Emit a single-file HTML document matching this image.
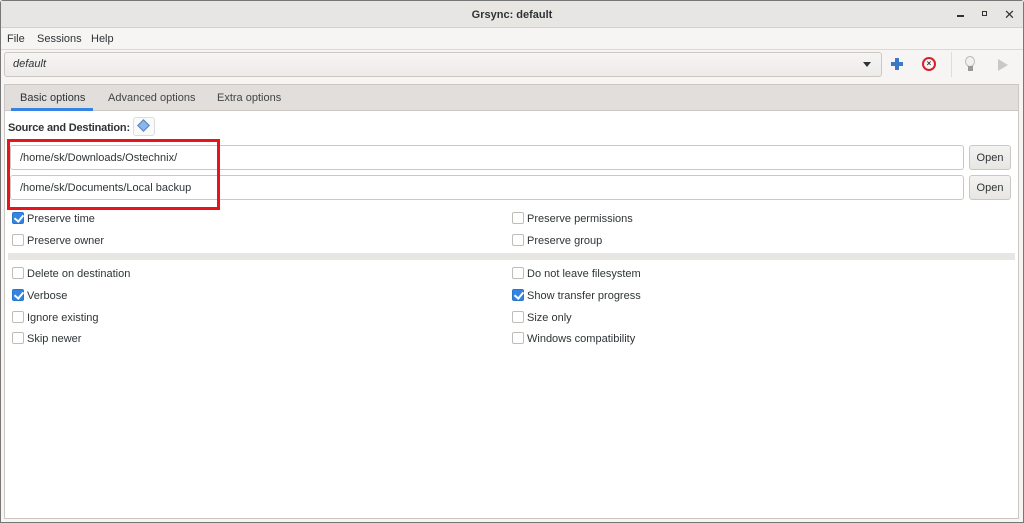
<!DOCTYPE html><html><head><style>
*{margin:0;padding:0;box-sizing:border-box}
body{width:1024px;height:523px;position:relative;background:#f6f5f4;font-family:"Liberation Sans","DejaVu Sans",sans-serif;font-size:11px;color:#2e3436;overflow:hidden}
.a{position:absolute}
.cb{position:absolute;width:12px;height:12px;border:1px solid #c0bdb8;border-radius:2px;background:#fff}
.cb.on{background:#3584e4;border-color:#2a76c6}
.cb.on::after{content:"";position:absolute;left:3px;top:0px;width:4px;height:7px;border:solid #fff;border-width:0 2px 2px 0;transform:rotate(40deg)}
.lbl{position:absolute;font-size:11px;color:#2e3436;margin-top:1px}
.entry{position:absolute;background:#fff;border:1px solid #cdc7c2;border-radius:3px;height:25px;padding-left:9px;line-height:24px;font-size:11px}
.btn{position:absolute;width:42px;height:25px;border:1px solid #cdc7c2;border-radius:3px;background:linear-gradient(#f4f3f2,#e8e6e3);text-align:center;line-height:24px;font-size:11px}
</style></head><body>
<div class="a" style="left:0;top:0;width:1024px;height:523px;border:1px solid #777;border-radius:3px 3px 0 0"></div>
<div class="a" style="left:1px;top:1px;width:1022px;height:27px;background:#e8e6e3;border-bottom:1px solid #d5d0cc"></div>
<div class="a" style="left:0;top:9px;width:1024px;text-align:center;font-weight:bold;font-size:11px;color:#2e3436">Grsync: default</div>
<div class="a" style="left:957px;top:15px;width:7px;height:2px;background:#2e3436"></div>
<div class="a" style="left:982px;top:11px;width:5px;height:5px;border:1.5px solid #2e3436"></div>
<div class="a" style="left:1004px;top:7px;font-size:13px;font-weight:bold">✕</div>
<div class="a" style="left:7px;top:33px;font-size:11px">File</div>
<div class="a" style="left:37px;top:33px;font-size:11px">Sessions</div>
<div class="a" style="left:91px;top:33px;font-size:11px">Help</div>
<div class="a" style="left:1px;top:49px;width:1022px;height:1px;background:#dcd8d4"></div>
<div class="a" style="left:4px;top:52px;width:878px;height:25px;border:1px solid #cdc7c2;border-radius:3px;background:linear-gradient(#f6f5f4,#edebe9)"></div>
<div class="a" style="left:13px;top:58px;font-style:italic;font-size:11px">default</div>
<div class="a" style="left:863px;top:62px;width:0;height:0;border-left:4px solid transparent;border-right:4px solid transparent;border-top:5px solid #2e3436"></div>
<svg class="a" style="left:890px;top:57px" width="14" height="14"><path d="M5 1h4v4h4v4h-4v4h-4v-4h-4v-4h4z" fill="#3a78c9"/></svg>
<div class="a" style="left:922px;top:57px;width:14px;height:14px;border:2px solid #d8202a;border-radius:50%;text-align:center;line-height:9px;font-size:8px;font-weight:bold;color:#333">×</div>
<div class="a" style="left:951px;top:52px;width:1px;height:25px;background:#ddd"></div>
<div class="a" style="left:965px;top:56px;width:10px;height:11px;border:1.5px solid #bbb;border-radius:50%;background:#f0f0f0"></div>
<div class="a" style="left:968px;top:66px;width:5px;height:5px;background:#999"></div>
<div class="a" style="left:998px;top:59px;width:0;height:0;border-top:6px solid transparent;border-bottom:6px solid transparent;border-left:10px solid #c8c8c8"></div>
<div class="a" style="left:4px;top:84px;width:1015px;height:435px;border:1px solid #cdc7c2;background:#fff"></div>
<div class="a" style="left:5px;top:85px;width:1013px;height:26px;background:#e1dedb;border-bottom:1px solid #cdc7c2"></div>
<div class="a" style="left:11px;top:85px;width:82px;height:26px;border-bottom:3px solid #3584e4"></div>
<div class="a" style="left:20px;top:92px;font-size:11px">Basic options</div>
<div class="a" style="left:108px;top:92px;font-size:11px;color:#444">Advanced options</div>
<div class="a" style="left:217px;top:92px;font-size:11px;color:#444">Extra options</div>
<div class="a" style="left:8px;top:122px;font-weight:bold;font-size:11px;letter-spacing:-0.2px">Source and Destination:</div>
<div class="a" style="left:133px;top:117px;width:22px;height:19px;border:1px solid #ddd;border-radius:3px;background:#fafafa"></div>
<div class="a" style="left:139px;top:121px;width:9px;height:9px;background:#8fb5e6;border:1px solid #4a82c9;transform:rotate(45deg)"></div>
<div class="entry" style="left:10px;top:145px;width:954px">/home/sk/Downloads/Ostechnix/</div>
<div class="entry" style="left:10px;top:175px;width:954px">/home/sk/Documents/Local backup</div>
<div class="btn" style="left:969px;top:145px">Open</div>
<div class="btn" style="left:969px;top:175px">Open</div>
<div class="a" style="left:7px;top:139px;width:213px;height:71px;border:3px solid #e8141b"></div>
<div class="cb on" style="left:12px;top:212px"></div><div class="lbl" style="left:27px;top:212px">Preserve time</div>
<div class="cb" style="left:12px;top:234px"></div><div class="lbl" style="left:27px;top:234px">Preserve owner</div>
<div class="cb" style="left:512px;top:212px"></div><div class="lbl" style="left:527px;top:212px">Preserve permissions</div>
<div class="cb" style="left:512px;top:234px"></div><div class="lbl" style="left:527px;top:234px">Preserve group</div>
<div class="a" style="left:8px;top:253px;width:1007px;height:7px;background:#e8e6e3"></div>
<div class="cb" style="left:12px;top:267px"></div><div class="lbl" style="left:27px;top:267px">Delete on destination</div>
<div class="cb on" style="left:12px;top:289px"></div><div class="lbl" style="left:27px;top:289px">Verbose</div>
<div class="cb" style="left:12px;top:311px"></div><div class="lbl" style="left:27px;top:311px">Ignore existing</div>
<div class="cb" style="left:12px;top:332px"></div><div class="lbl" style="left:27px;top:332px">Skip newer</div>
<div class="cb" style="left:512px;top:267px"></div><div class="lbl" style="left:527px;top:267px">Do not leave filesystem</div>
<div class="cb on" style="left:512px;top:289px"></div><div class="lbl" style="left:527px;top:289px">Show transfer progress</div>
<div class="cb" style="left:512px;top:311px"></div><div class="lbl" style="left:527px;top:311px">Size only</div>
<div class="cb" style="left:512px;top:332px"></div><div class="lbl" style="left:527px;top:332px">Windows compatibility</div>
</body></html>
